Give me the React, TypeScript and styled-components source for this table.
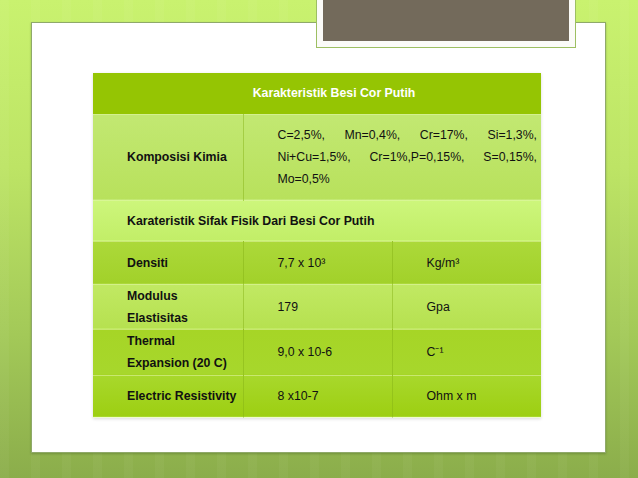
import React from 'react';
import styled, { createGlobalStyle } from 'styled-components';

const GlobalStyle = createGlobalStyle`
  html, body {
    margin: 0;
    padding: 0;
  }
  body {
    width: 638px;
    height: 478px;
    overflow: hidden;
    font-family: 'Liberation Sans', Arial, sans-serif;
  }
`;

const Slide = styled.div`
  position: relative;
  width: 638px;
  height: 478px;
  box-sizing: border-box;
  padding: 22px 32px 0 31px;
  background:
    repeating-linear-gradient(
      90deg,
      rgba(255, 255, 255, 0.035) 0px,
      rgba(255, 255, 255, 0.035) 9px,
      rgba(255, 255, 255, 0) 9px,
      rgba(255, 255, 255, 0) 31px
    ),
    linear-gradient(180deg, #c9f26f 0%, #bde465 35%, #a3c958 70%, #8bad4b 100%);
`;

const Card = styled.div`
  width: 575px;
  height: 431px;
  box-sizing: border-box;
  background: #ffffff;
  border: 1px solid #8fa96a;
  box-shadow: 0 1px 2px rgba(60, 80, 30, 0.35);
  padding: 50px 64px 0 61px;
`;

const Tab = styled.div`
  position: absolute;
  top: 0;
  left: 317px;
  width: 258px;
  height: 47px;
  box-sizing: border-box;
  background: #736a5b;
  border: 6px solid #fbfbf8;
  border-top: none;
  box-shadow: 0 0 0 1px #9dbf62;
`;

const Table = styled.table`
  width: 448px;
  border-collapse: collapse;
  table-layout: fixed;
  font-size: 12.3px;
  color: #111;
  box-shadow: 0 1px 3px rgba(0, 0, 0, 0.15);
`;

const Row = styled.tr<{ $bg: string; $h: number }>`
  height: ${({ $h }) => $h}px;
  background: ${({ $bg }) => $bg};
  border-bottom: 1px solid rgba(225, 245, 170, 0.55);
`;

const Cell = styled.td<{ $bold?: boolean }>`
  padding: 0 4px 0 34px;
  vertical-align: middle;
  font-weight: ${({ $bold }) => ($bold ? 700 : 400)};
  line-height: 22px;
  border-left: 1px solid rgba(130, 175, 20, 0.45);
  &:first-child {
    border-left: none;
  }
`;

const HeadCell = styled.td`
  padding: 0 0 0 34px;
  text-align: center;
  color: #ffffff;
  font-weight: 700;
`;

const Line = styled.div<{ $spread?: boolean }>`
  text-align: ${({ $spread }) => ($spread ? 'justify' : 'left')};
  text-align-last: ${({ $spread }) => ($spread ? 'justify' : 'left')};
`;

const lines = [
  { text: 'C=2,5%,      Mn=0,4%,      Cr=17%,      Si=1,3%,', spread: true },
  { text: 'Ni+Cu=1,5%,      Cr=1%,P=0,15%,      S=0,15%,', spread: true },
  { text: 'Mo=0,5%', spread: false },
];

const props = [
  { name: ['Densiti'], value: '7,7 x 10³', unit: 'Kg/m³', h: 43, bg: 'linear-gradient(180deg, #acd93a 0%, #a2d12a 100%)' },
  { name: ['Modulus', 'Elastisitas'], value: '179', unit: 'Gpa', h: 44, bg: 'linear-gradient(180deg, #c1e963 0%, #b6e150 100%)' },
  { name: ['Thermal', 'Expansion (20 C)'], value: '9,0 x 10-6', unit: 'C⁻¹', h: 46, bg: 'linear-gradient(180deg, #a6d526 0%, #a7d72c 100%)' },
  { name: ['Electric Resistivity'], value: '8 x10-7', unit: 'Ohm x m', h: 42, bg: 'linear-gradient(180deg, #a8d82c 0%, #9dcf12 100%)' },
];

const App = () => {
  return (
    <Slide>
      <GlobalStyle />
      <Tab />
      <Card>
        <Table>
          <colgroup>
            <col style={{ width: 150 }} />
            <col style={{ width: 149 }} />
            <col style={{ width: 149 }} />
          </colgroup>
          <tbody>
            <Row $bg="#95c503" $h={41}>
              <HeadCell colSpan={3}>Karakteristik Besi Cor Putih</HeadCell>
            </Row>
            <Row $bg="linear-gradient(180deg, #c2e872 0%, #b8e15c 100%)" $h={86}>
              <Cell $bold>Komposisi Kimia</Cell>
              <Cell colSpan={2}>
                {lines.map((l) => (
                  <Line key={l.text} $spread={l.spread}>
                    {l.text}
                  </Line>
                ))}
              </Cell>
            </Row>
            <Row $bg="linear-gradient(180deg, #cdf67c 0%, #c2ee68 100%)" $h={41}>
              <Cell $bold colSpan={3}>
                Karateristik Sifak Fisik Dari Besi Cor Putih
              </Cell>
            </Row>
            {props.map((p) => (
              <Row key={p.value} $bg={p.bg} $h={p.h}>
                <Cell $bold>
                  {p.name.map((n) => (
                    <div key={n}>{n}</div>
                  ))}
                </Cell>
                <Cell>{p.value}</Cell>
                <Cell>{p.unit}</Cell>
              </Row>
            ))}
          </tbody>
        </Table>
      </Card>
    </Slide>
  );
};

export default App;
